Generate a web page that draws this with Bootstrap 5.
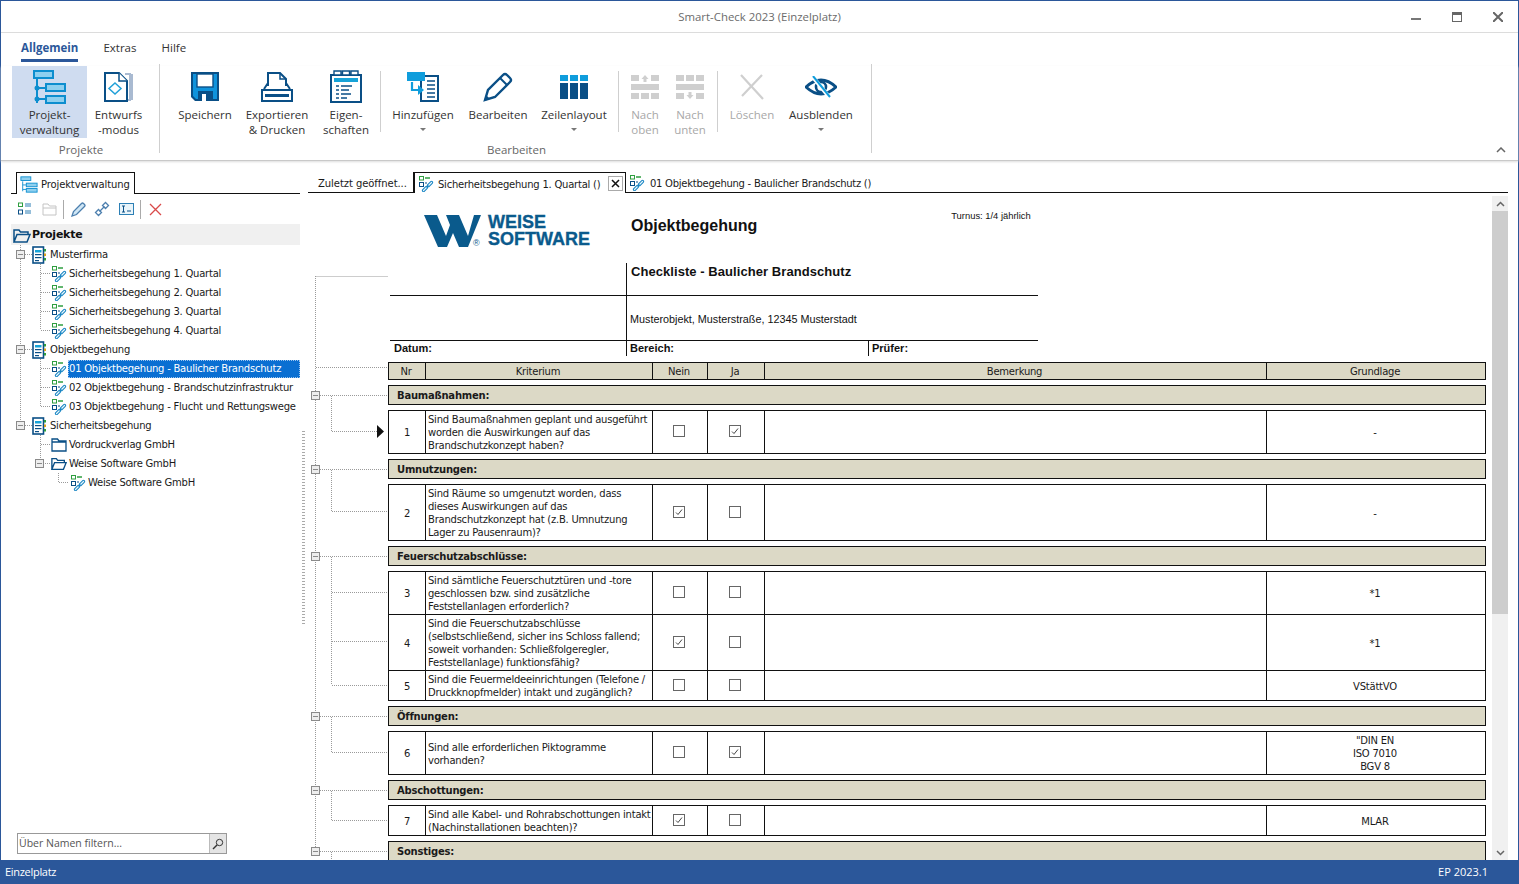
<!DOCTYPE html>
<html lang="de"><head><meta charset="utf-8"><title>Smart-Check 2023</title>
<link href="https://cdn.jsdelivr.net/npm/bootstrap@5.3.0/dist/css/bootstrap.min.css" rel="stylesheet">
<style>
html,body{height:884px;overflow:hidden;background:#fff}
body{font-family:"DejaVu Sans",sans-serif;font-size:10px;letter-spacing:-.23px;color:#1a1a1a}
svg{display:block;flex:none}
.win{height:884px;border:1px solid #2b579a;border-bottom:0}
.ui{font-family:"Open Sans",sans-serif;letter-spacing:0}
.tbar{height:32px;border-bottom:1px solid #dcdcdc;display:grid;grid-template-columns:1fr auto 1fr;align-items:center;font-size:11.4px;color:#6b6b6b}
.wctl{width:41px;display:flex;justify-content:center}
.rtabs{height:33px;padding-left:20px;font-size:11.5px;gap:25px;color:#333;line-height:16px;align-items:flex-start}
.rtab-on{color:#2b579a;font-weight:700;border-bottom:3px solid #2b579a;padding-top:7px;padding-bottom:3px}
.rtab{padding-top:7px}
.rbody{height:95px;border-bottom:1px solid #c9c9c9;box-shadow:0 1px 2px #ddd;padding-left:11px;position:relative}
.rgroup{display:flex;flex-direction:column;border-right:1px solid #cfcfcf;height:89px;margin-top:-2px;padding-top:2px}
.g1{width:148px}.g2{width:712px;padding-left:12px}
.rrow{display:flex;height:72px;align-items:flex-start;flex:none}
.rlabel{font-size:11.500px;color:#666;text-align:center;height:17px;line-height:17px;margin-top:3px;flex:none}
.g1 .rlabel{padding-right:9px}.g2 .rlabel{padding-right:10px}
.rb{display:flex;flex-direction:column;align-items:center;height:72px;font-size:11.5px;line-height:15px;color:#333;text-align:center;white-space:nowrap}
.rb-on{background:#cfdcf0}
.rb-ic{height:41px;display:flex;align-items:center;justify-content:center;flex:none}
.off{color:#a8a8a8}
.w75{width:75px}.w63{width:63px}.w66{width:66px}.w74{width:74px}.w64{width:64px}.w72{width:72px}.w80{width:80px}.w42{width:42px}.w56{width:56px}
.isep{width:1px;height:61px;background:#cfcfcf;margin-top:5px;flex:none}
.ml2{margin-left:2px}.ml3{margin-left:3px}.ml4{margin-left:4px}.ml5{margin-left:5px}.ml6{margin-left:6px}.mr5{margin-right:5px}.mr6{margin-right:6px}
.drop{width:0;height:0;border-left:3px solid transparent;border-right:3px solid transparent;border-top:3px solid #777;margin-top:6px}
.chev{position:absolute;right:12px;bottom:7px}
.main{height:699px}
.lp{width:307px;padding:11px 8px 0 10px;position:relative;flex:none}
.ptabs{height:22px;border-bottom:1px solid #111;padding-left:5px}
.ptab{width:119px;height:22px;border:1px solid #111;border-bottom:0;background:#fff;display:flex;align-items:center;gap:3px;padding:2px 0 0 3px;white-space:nowrap;letter-spacing:-.12px}
.tools{height:30px;padding-left:7px}
.tools-sep{width:1px;height:19px;background:#aaa}
.t-a{margin-left:10px;margin-right:5px}.t-b{margin-left:7px}.t-c{margin-left:8px}.t-d{margin-left:9px;margin-right:6px}.t-e{margin-left:8px}
.thead{height:21px;background:#f0f0f0;font-weight:700;font-size:11px;color:#111;padding:2px 0 0 2px;gap:1px}
.tree{position:relative}
.tree-lines{position:absolute;left:0;top:0}
.tr{height:19px;display:flex;align-items:center}
.l1{padding-left:21px}.l2{padding-left:40px}.l3{padding-left:59px}
.tr>span{margin-left:2px;line-height:18px;height:18px;flex:1;white-space:nowrap}
.l1>span{margin-left:4px}
.tr>span.sel{background:#0a6fd2;color:#fff;outline:1px dotted #9cc4ee;outline-offset:-1px;padding-left:1px;margin-left:1px}
.grip{position:absolute;left:301px;top:270px;width:3px;height:194px;background:repeating-linear-gradient(#aaa 0 1px,transparent 1px 3px)}
.filter{position:absolute;left:16px;bottom:6px;width:210px;height:21px;border:1px solid #999;padding-left:1px;color:#555;font-size:10.500px;line-height:18px;display:flex;justify-content:space-between}
.fbtn{width:17px;height:19px;background:#e4e4e4;border-left:1px solid #bbb;display:flex;align-items:center;justify-content:center}
.rp{width:1210px;padding-top:11px;flex:none}
.dtabs{height:21px;border-bottom:1px solid #111;margin-right:10px;align-items:flex-end}
.dtab{height:20px;display:flex;align-items:center;gap:4px;white-space:nowrap;padding-top:2px}
.dt1{width:106px;padding-left:10px;border-right:1px solid #111;letter-spacing:-.06px}
.dt2{width:212px;height:21px;border:1px solid #111;border-bottom:0;background:#fff;position:relative;top:1px;padding-left:3px}
.dt3{padding-left:3px;gap:5px;letter-spacing:-.26px}
.xbox{width:15px;height:15px;border:1px solid #aaa;display:flex;align-items:center;justify-content:center;margin:-1px 2px 0 auto}
.doc{height:667px;overflow:hidden;position:relative}
.gut{position:absolute;left:0;top:0}
.rep{width:1178px;padding-left:80px;flex:none}
.hd{margin-left:2px;display:grid;grid-template-columns:237px 242px 169px;grid-template-rows:70px 33px 45px 15px;width:648px;font-family:"Liberation Sans",sans-serif;letter-spacing:0;color:#111;margin-bottom:6px}
.h-logo{padding:21px 0 0 34px;display:flex;gap:7px;position:relative}
.lg{font-family:"Liberation Sans",sans-serif;font-weight:700;color:#0a5a8c;font-size:18px;line-height:16.500px;margin-top:0;-webkit-text-stroke:.35px #0a5a8c}
.reg{position:absolute;left:83px;top:46px;color:#0a5a8c;font-size:9px;line-height:9px}
.h-title{grid-column:span 2;display:flex;padding-left:4px;padding-top:23px;font-size:16px;font-weight:700;line-height:20px}
.h-turnus{font-size:9.400px;font-weight:400;margin-left:194px;margin-top:-5px;line-height:10px;white-space:nowrap}
.h-l2{border-right:1px solid #111;border-bottom:1px solid #111}
.h-r2{grid-column:span 2;border-bottom:1px solid #111;font-size:13px;font-weight:700;padding:1px 0 0 4px;line-height:16px;letter-spacing:.06px}
.h-r3{grid-column:span 2;border-bottom:1px solid #111;font-size:10.800px;padding:16px 0 0 3px;line-height:14px}
.h-d{font-weight:700;font-size:11px;padding-left:4px;line-height:15px}
.h-bd{border-right:1px solid #111}
.h-e{padding-left:3px}
.tbl{display:flex;flex-direction:column;gap:5px;width:1098px}
.trw{display:grid;grid-template-columns:37px 227px 55px 57px 502px 1fr;border:1px solid #111;background:#fff}
.trw>div{border-right:1px solid #111;display:flex;align-items:center;justify-content:center;text-align:center;padding:2px 0 1px;line-height:13px}
.trw>div:last-child{border-right:0}
.trw>div.q{justify-content:flex-start;text-align:left;padding-left:2px;white-space:nowrap}
.trw>div.c{padding-right:2px}
.thd{height:18px;background:#dcd9c6}
.trw.thd>div{padding:1px 2px 0 0}
.trw.thd{background:#dcd9c6}
.band{height:20px;background:#dcd9c6;border:1px solid #111;font-weight:700;padding-left:8px;padding-top:1px;line-height:18px}
.stack{display:flex;flex-direction:column}
.stack>.trw+.trw{margin-top:-1px}
.cb{width:12px;height:12px;border:1px solid #666;background:#fff;display:block;margin:-3px 2px 0 0}
.cb svg{width:10px;height:10px}
.sb{width:16px;height:664px;margin:3px 0 0 6px;background:#f0f0f0;flex:none;display:flex;flex-direction:column;align-items:center}
.sb-a{height:15px;display:flex;align-items:center;justify-content:center;flex:none}
.sb-t{width:16px;height:403px;background:#cdcdcd;flex:none}
.sb-s{flex:1}
.stat{height:24px;background:#2b579a;color:#fff;padding:0 31px 0 5px;font-size:11px;margin:0 -1px}
.stat span:first-child{letter-spacing:-.3px}
</style></head>
<body>
<svg width="0" height="0" class="position-absolute">
<defs>
<symbol id="book" viewBox="0 0 14 18"><rect x="1" y="1" width="10.500" height="16" fill="#fff" stroke="#0a4f86" stroke-width="1.600"/><rect x="3" y="4" width="6.500" height="2.500" fill="#16a3d8"/><rect x="3" y="8" width="6.500" height="1.200" fill="#0a4f86"/><rect x="3" y="11" width="6.500" height="1.200" fill="#0a4f86"/><rect x="3" y="14" width="4" height="1.200" fill="#0a4f86"/><rect x="12" y="3" width="2" height="2.500" fill="#2e9e3f"/><rect x="12" y="7.500" width="2" height="2.500" fill="#d9a21b"/><rect x="12" y="12" width="2" height="2.500" fill="#2e9e3f"/></symbol>
<symbol id="rpt" viewBox="0 0 16 16"><rect x="1.500" y=".5" width="4" height="3.500" fill="#fff" stroke="#2e9e3f"/><path d="M7 2h5" stroke="#2e9e3f" stroke-width="1.500"/><rect x="1.500" y="6.500" width="4" height="4" fill="#fff" stroke="#0a4f86"/><path d="M7 7h2" stroke="#0a4f86"/><path d="M5.500 14.500l3-3M10.500 9.500l3-3" stroke="#1a86c4" stroke-width="3.200" stroke-linecap="round"/><path d="M5.500 14.500l3-3M10.500 9.500l3-3" stroke="#e9f6fc" stroke-width="1.200" stroke-linecap="round"/><path d="M8.500 11.500l2-2" stroke="#1a86c4" stroke-width="1.600"/></symbol>
<symbol id="fopen" viewBox="0 0 18 14"><path d="M1 13V1h5l1.500 2H15v2.500M1 13l3-7.500h13L14 13H1z" fill="none" stroke="#0a4f86" stroke-width="1.500"/></symbol>
<symbol id="fclosed" viewBox="0 0 16 14"><path d="M1 13V1h5.500l1.500 2h7v10H1zM1 4h14" fill="none" stroke="#0a4f86" stroke-width="1.300"/></symbol>
<symbol id="tick" viewBox="0 0 10 10"><path d="M2 5.500l2 2 4-5" fill="none" stroke="#444" stroke-width="1"/></symbol>
</defs>
</svg>
<div class="win d-flex flex-column">
 <div class="tbar ui">
  <div></div><div>Smart-Check 2023 (Einzelplatz)</div>
  <div class="d-flex justify-content-end">
   <div class="wctl"><svg width="10" height="10" viewBox="0 0 10 10"><path d="M0 7h10" stroke="#777" stroke-width="2"/></svg></div>
   <div class="wctl"><svg width="10" height="10" viewBox="0 0 10 10"><rect x=".5" y=".5" width="9" height="9" fill="none" stroke="#666"/><path d="M0 2h10" stroke="#666" stroke-width="2"/></svg></div>
   <div class="wctl"><svg width="10" height="10" viewBox="0 0 10 10"><path d="M0 0l10 10M10 0L0 10" stroke="#666" stroke-width="2"/></svg></div>
  </div>
 </div>
 <div class="rtabs ui d-flex"><div class="rtab-on">Allgemein</div><div class="rtab">Extras</div><div class="rtab">Hilfe</div></div>
 <div class="rbody ui d-flex">
  <div class="rgroup g1">
   <div class="rrow">
    <div class="rb w75 rb-on"><div class="rb-ic"><svg width="34" height="36" viewBox="0 0 34 36"><path d="M4 10v24M4 19h9M4 30h9" stroke="#0d8ecf" stroke-width="2"/><rect x="1" y="2" width="19" height="7" fill="#8fd0ef" stroke="#0d8ecf" stroke-width="2"/><rect x="13" y="15" width="19" height="7" fill="#8fd0ef" stroke="#0d8ecf" stroke-width="2"/><rect x="13" y="27" width="19" height="7" fill="#8fd0ef" stroke="#0d8ecf" stroke-width="2"/><circle cx="4" cy="19" r="2.500" fill="#0d8ecf"/><circle cx="4" cy="30" r="2.500" fill="#0d8ecf"/></svg></div><div>Projekt-<br>verwaltung</div></div>
    <div class="rb w63"><div class="rb-ic"><svg width="30" height="30" viewBox="0 0 30 30"><path d="M21 2h5v26h-5M25 3h3v24h-3" fill="none" stroke="#a9bad1" stroke-width="2"/><path d="M1 1h14l8 8v20H1z" fill="#fff" stroke="#0a4f86" stroke-width="2"/><path d="M15 1v8h8" fill="#fff" stroke="#0a4f86" stroke-width="1.500"/><path d="M11 11l6 5.500-6 5.500-6-5.500z" fill="none" stroke="#21a0d8" stroke-width="1.500"/></svg></div><div>Entwurfs<br>-modus</div></div>
   </div>
   <div class="rlabel">Projekte</div>
  </div>
  <div class="rgroup g2">
   <div class="rrow">
    <div class="rb w66"><div class="rb-ic"><svg width="28" height="29" viewBox="0 0 28 29"><path d="M0 0h28v29H4l-4-4z" fill="#0a4f86"/><path d="M2 2h24v25H5l-3-3z" fill="#0f93dc"/><rect x="6" y="2" width="16" height="13" fill="#fff" stroke="#0a4f86" stroke-width="1.400"/><rect x="7" y="19" width="15" height="10" fill="#0a4f86"/><rect x="11" y="22" width="4" height="7" fill="#fff"/></svg></div><div>Speichern</div></div>
    <div class="rb w74 ml2"><div class="rb-ic"><svg width="32" height="30" viewBox="0 0 32 30"><path d="M7 14V1h12l6 6v7" fill="#fff" stroke="#0a4f86" stroke-width="2"/><path d="M19 1v6h6" fill="none" stroke="#0a4f86" stroke-width="1.500"/><path d="M7 11L3 17M25 11l4 6" stroke="#0a4f86" stroke-width="2"/><path d="M1 18h30v11H1z" fill="#fff" stroke="#0a4f86" stroke-width="2"/><rect x="4" y="22" width="24" height="3" fill="#0a4f86"/></svg></div><div>Exportieren<br>&amp; Drucken</div></div>
    <div class="rb w64"><div class="rb-ic"><svg width="32" height="33" viewBox="0 0 32 33"><rect x="1" y="5" width="30" height="27" fill="#fff" stroke="#0a4f86" stroke-width="2"/><path d="M4 1h7v4H4zM12.500 1h7v4h-7zM21 1h7v4h-7z" fill="#fff" stroke="#0a4f86" stroke-width="1.400"/><rect x="4" y="8" width="24" height="4" fill="#16a3d8"/><path d="M6 16h3M11 16h11M6 20h3M11 20h8M6 24h3M11 24h10M6 28h3M11 28h6" stroke="#0a4f86" stroke-width="1.600"/></svg></div><div>Eigen-<br>schaften</div></div>
    <div class="isep ml2"></div>
    <div class="rb w74 ml5"><div class="rb-ic"><svg width="32" height="30" viewBox="0 0 32 30"><path d="M14 4h17v25H14z" fill="#fff" stroke="#0a4f86" stroke-width="2"/><path d="M20 9h8M20 13h8M20 17h8M20 21h8M20 25h8" stroke="#0a4f86" stroke-width="1.600"/><rect x="0" y="0" width="18" height="9" fill="#0f9ddc"/><path d="M5 10v8h8" fill="none" stroke="#0f9ddc" stroke-width="2.200"/><path d="M11 13l6 5-6 5z" fill="#0f9ddc"/></svg></div><div>Hinzufügen</div><div class="drop"></div></div>
    <div class="rb w72 ml2"><div class="rb-ic"><svg width="30" height="30" viewBox="0 0 30 30"><path d="M2 28l3-10L20 3q2-2 4 0l3 3q2 2 0 4L12 25z" fill="#fff" stroke="#0a4f86" stroke-width="2.400"/><path d="M17 6l7 7" stroke="#0a4f86" stroke-width="2"/><path d="M1 29l2-6 4 4z" fill="#0a4f86"/></svg></div><div>Bearbeiten</div></div>
    <div class="rb w80"><div class="rb-ic"><svg width="28" height="24" viewBox="0 0 28 24"><path d="M0 0h8v6H0zM10 0h8v6h-8zM20 0h8v6h-8z" fill="#0f9ddc"/><path d="M0 8h8v16H0zM10 8h8v16h-8zM20 8h8v16h-8z" fill="#0a4f86"/></svg></div><div>Zeilenlayout</div><div class="drop"></div></div>
    <div class="isep ml4 mr5"></div>
    <div class="rb w42 off"><div class="rb-ic"><svg width="28" height="24" viewBox="0 0 28 24"><path d="M0 0h8v6H0zM20 0h8v6h-8zM0 9h28v6H0zM0 18h8v6H0zM10 18h8v6h-8zM20 18h8v6h-8zM14 0l3.500 4H15.500v3h-3V4H10.500z" fill="#cfcfcf"/></svg></div><div>Nach<br>oben</div></div>
    <div class="rb w42 off ml3"><div class="rb-ic"><svg width="28" height="24" viewBox="0 0 28 24"><path d="M0 0h8v6H0zM10 0h8v6h-8zM20 0h8v6h-8zM0 9h28v6H0zM0 18h8v6H0zM20 18h8v6h-8zM14 24l3.500-4H15.500v-3h-3v3H10.500z" fill="#cfcfcf"/></svg></div><div>Nach<br>unten</div></div>
    <div class="isep ml6 mr6"></div>
    <div class="rb w56 off"><div class="rb-ic"><svg width="24" height="26" viewBox="0 0 24 26"><path d="M1 1l22 24M22 1L2 22" stroke="#cfcfcf" stroke-width="2.200"/></svg></div><div>Löschen</div></div>
    <div class="rb w74 ml4"><div class="rb-ic"><svg width="32" height="22" viewBox="0 0 32 22"><path d="M1 11q15-14 30 0q-15 14-30 0z" fill="#fff" stroke="#0a4f86" stroke-width="3"/><circle cx="16" cy="11" r="5" fill="none" stroke="#0a4f86" stroke-width="2.600"/><path d="M7 0l18 22" stroke="#fff" stroke-width="4"/><path d="M8 0l17 21" stroke="#0f9ddc" stroke-width="2"/></svg></div><div>Ausblenden</div><div class="drop"></div></div>
   </div>
   <div class="rlabel">Bearbeiten</div>
  </div>
  <svg class="chev" width="10" height="6" viewBox="0 0 10 6"><path d="M1 5l4-4 4 4" fill="none" stroke="#666" stroke-width="1.500"/></svg>
 </div>
 <div class="main d-flex">
  <div class="lp">
   <div class="ptabs d-flex"><div class="ptab"><svg width="18" height="19" viewBox="0 0 20 19"><path d="M3 6v11M3 10h5M3 15h5" stroke="#0d8ecf"/><rect x="1" y="1" width="11" height="4" fill="#8fd0ef" stroke="#0d8ecf"/><rect x="7" y="8" width="12" height="4" fill="#8fd0ef" stroke="#0d8ecf"/><rect x="7" y="14" width="12" height="4" fill="#8fd0ef" stroke="#0d8ecf"/></svg>Projektverwaltung</div></div>
   <div class="tools d-flex align-items-center">
    <svg width="14" height="14" viewBox="0 0 14 14"><rect x=".5" y="1" width="4" height="3.500" fill="none" stroke="#2e9e3f"/><path d="M7 2h6M7 4h6M7 9h6M7 11h6" stroke="#2c7fb5"/><rect x=".5" y="8" width="4" height="4" fill="none" stroke="#0a4f86"/></svg>
    <svg class="t-a" width="16" height="13" viewBox="0 0 16 13"><path d="M1 12V1h5l1.500 2H14v9zM1 5h13" fill="none" stroke="#c4c4c4"/></svg>
    <div class="tools-sep"></div>
    <svg class="t-b" width="15" height="15" viewBox="0 0 15 15"><path d="M1 14l1.500-4.500L10.500 1.500q1-1 2 0l1 1q1 1 0 2L5.500 12.500z" fill="#cfe6f5" stroke="#4d7fae" stroke-width="1.300"/></svg>
    <svg class="t-c" width="16" height="16" viewBox="0 0 16 16"><path d="M1.500 11.500l3-3 3 3-3 3zM8.500 4.500l3-3 3 3-3 3z" fill="#fff" stroke="#4d7fae" stroke-width="1.300"/><path d="M5.500 10.500l5-5" stroke="#4d7fae" stroke-width="1.300"/></svg>
    <svg class="t-d" width="15" height="12" viewBox="0 0 15 12"><rect x=".5" y=".5" width="14" height="11" fill="#e8f4fa" stroke="#2c7fb5"/><path d="M3 3h3M3 9h3M4.500 3v6M8 8h4" stroke="#0a4f86"/></svg>
    <div class="tools-sep"></div>
    <svg class="t-e" width="13" height="13" viewBox="0 0 13 13"><path d="M1 1l11 11M12 1L1 12" stroke="#d94a4a" stroke-width="1.300"/></svg>
   </div>
   <div class="thead d-flex align-items-center"><svg width="18" height="14"><use href="#fopen"/></svg>Projekte</div>
   <div class="tree">
    <div class="tr l1"><svg width="14" height="18"><use href="#book"/></svg><span>Musterfirma</span></div>
    <div class="tr l2"><svg width="16" height="16"><use href="#rpt"/></svg><span>Sicherheitsbegehung 1. Quartal</span></div>
    <div class="tr l2"><svg width="16" height="16"><use href="#rpt"/></svg><span>Sicherheitsbegehung 2. Quartal</span></div>
    <div class="tr l2"><svg width="16" height="16"><use href="#rpt"/></svg><span>Sicherheitsbegehung 3. Quartal</span></div>
    <div class="tr l2"><svg width="16" height="16"><use href="#rpt"/></svg><span>Sicherheitsbegehung 4. Quartal</span></div>
    <div class="tr l1"><svg width="14" height="18"><use href="#book"/></svg><span>Objektbegehung</span></div>
    <div class="tr l2"><svg width="16" height="16"><use href="#rpt"/></svg><span class="sel">01 Objektbegehung - Baulicher Brandschutz</span></div>
    <div class="tr l2"><svg width="16" height="16"><use href="#rpt"/></svg><span>02 Objektbegehung - Brandschutzinfrastruktur</span></div>
    <div class="tr l2"><svg width="16" height="16"><use href="#rpt"/></svg><span>03 Objektbegehung - Flucht und Rettungswege</span></div>
    <div class="tr l1"><svg width="14" height="18"><use href="#book"/></svg><span>Sicherheitsbegehung</span></div>
    <div class="tr l2"><svg width="16" height="14"><use href="#fclosed"/></svg><span>Vordruckverlag GmbH</span></div>
    <div class="tr l2"><svg width="16" height="14"><use href="#fopen"/></svg><span>Weise Software GmbH</span></div>
    <div class="tr l3"><svg width="16" height="16"><use href="#rpt"/></svg><span>Weise Software GmbH</span></div>
    <svg class="tree-lines" width="289" height="250" viewBox="11 245 289 250" fill="none" stroke="#9a9a9a" stroke-dasharray="1 1">
     <path d="M20.500 245v180M25 254.500h7M40.500 264v66M41 273.500h9M41 292.500h9M41 311.500h9M41 330.500h9M25 349.500h7M40.500 359v47M41 368.500h9M41 387.500h9M41 406.500h9M25 425.500h7M40.500 435v28M41 444.500h9M45 463.500h5M58.500 473v9M59 482.500h10"/>
     <g stroke="#8a8a8a" stroke-dasharray="none" fill="#eee"><rect x="16.500" y="250.500" width="8" height="8"/><rect x="16.500" y="345.500" width="8" height="8"/><rect x="16.500" y="421.500" width="8" height="8"/><rect x="35.500" y="459.500" width="8" height="8"/><path d="M18 254.500h5M18 349.500h5M18 425.500h5M37 463.500h5"/></g>
    </svg>
   </div>
   <div class="grip"></div>
   <div class="filter ui"><span>Über Namen filtern...</span><div class="fbtn"><svg width="12" height="12" viewBox="0 0 12 12"><circle cx="7.500" cy="4.500" r="3.200" fill="none" stroke="#333"/><path d="M5 7l-4 4" stroke="#333" stroke-width="1.400"/></svg></div></div>
  </div>
  <div class="rp">
   <div class="dtabs d-flex">
    <div class="dtab dt1">Zuletzt geöffnet...</div>
    <div class="dtab dt2"><svg width="16" height="16"><use href="#rpt"/></svg>Sicherheitsbegehung 1. Quartal ()<div class="xbox"><svg width="9" height="9" viewBox="0 0 9 9"><path d="M1 1l7 7M8 1L1 8" stroke="#111" stroke-width="1.500"/></svg></div></div>
    <div class="dtab dt3"><svg width="16" height="16"><use href="#rpt"/></svg>01 Objektbegehung - Baulicher Brandschutz ()</div>
   </div>
   <div class="doc d-flex">
    <div class="rep">
     <div class="hd">
      <div class="h-logo">
       <svg width="57" height="34" viewBox="0 0 57 34"><path d="M0 1h13l9 21 4-11L22 1h13l9 21L50 1h7L44 33H35l-6-14-6 14H14z" fill="#0a5a8c"/></svg>
       <div class="lg">WEISE<br>SOFTWARE</div><span class="reg">®</span>
      </div>
      <div class="h-title">Objektbegehung<span class="h-turnus">Turnus: 1/4 jährlich</span></div>
      <div class="h-l2"></div><div class="h-r2">Checkliste - Baulicher Brandschutz</div>
      <div class="h-l2"></div><div class="h-r3">Musterobjekt, Musterstraße, 12345 Musterstadt</div>
      <div class="h-d h-bd">Datum:</div><div class="h-d h-e h-bd">Bereich:</div><div class="h-d h-e">Prüfer:</div>
     </div>
     <div class="tbl">
      <div class="trw thd"><div>Nr</div><div>Kriterium</div><div>Nein</div><div>Ja</div><div>Bemerkung</div><div>Grundlage</div></div>
      <div class="band">Baumaßnahmen:</div>
      <div class="trw"><div>1</div><div class="q">Sind Baumaßnahmen geplant und ausgeführt<br>worden die Auswirkungen auf das<br>Brandschutzkonzept haben?</div><div><span class="cb"></span></div><div><span class="cb"><svg><use href="#tick"/></svg></span></div><div></div><div class="c">-</div></div>
      <div class="band">Umnutzungen:</div>
      <div class="trw"><div>2</div><div class="q">Sind Räume so umgenutzt worden, dass<br>dieses Auswirkungen auf das<br>Brandschutzkonzept hat (z.B. Umnutzung<br>Lager zu Pausenraum)?</div><div><span class="cb"><svg><use href="#tick"/></svg></span></div><div><span class="cb"></span></div><div></div><div class="c">-</div></div>
      <div class="band">Feuerschutzabschlüsse:</div>
      <div class="stack">
       <div class="trw"><div>3</div><div class="q">Sind sämtliche Feuerschutztüren und -tore<br>geschlossen bzw. sind zusätzliche<br>Feststellanlagen erforderlich?</div><div><span class="cb"></span></div><div><span class="cb"></span></div><div></div><div class="c">*1</div></div>
       <div class="trw"><div>4</div><div class="q">Sind die Feuerschutzabschlüsse<br>(selbstschließend, sicher ins Schloss fallend;<br>soweit vorhanden: Schließfolgeregler,<br>Feststellanlage) funktionsfähig?</div><div><span class="cb"><svg><use href="#tick"/></svg></span></div><div><span class="cb"></span></div><div></div><div class="c">*1</div></div>
       <div class="trw"><div>5</div><div class="q">Sind die Feuermeldeeinrichtungen (Telefone /<br>Druckknopfmelder) intakt und zugänglich?</div><div><span class="cb"></span></div><div><span class="cb"></span></div><div></div><div class="c">VStättVO</div></div>
      </div>
      <div class="band">Öffnungen:</div>
      <div class="trw"><div>6</div><div class="q">Sind alle erforderlichen Piktogramme<br>vorhanden?</div><div><span class="cb"></span></div><div><span class="cb"><svg><use href="#tick"/></svg></span></div><div></div><div class="c">"DIN EN<br>ISO 7010<br>BGV 8</div></div>
      <div class="band">Abschottungen:</div>
      <div class="trw"><div>7</div><div class="q">Sind alle Kabel- und Rohrabschottungen intakt<br>(Nachinstallationen beachten)?</div><div><span class="cb"><svg><use href="#tick"/></svg></span></div><div><span class="cb"></span></div><div></div><div class="c">MLAR</div></div>
      <div class="band">Sonstiges:</div>
     </div>
    </div>
    <div class="sb"><div class="sb-a"><svg width="9" height="6" viewBox="0 0 9 6"><path d="M1 5l3.500-3.500L8 5" fill="none" stroke="#666" stroke-width="1.500"/></svg></div><div class="sb-t"></div><div class="sb-s"></div><div class="sb-a"><svg width="9" height="6" viewBox="0 0 9 6"><path d="M1 1l3.500 3.500L8 1" fill="none" stroke="#666" stroke-width="1.500"/></svg></div></div>
    <svg class="gut" width="80" height="667" viewBox="308 193 80 667" fill="none" stroke="#9a9a9a" stroke-dasharray="1 1">
     <path d="M315.500 276.500H388M315.500 276v575M316 367.500H388M320 395.500H388M331.500 396v36M332 431.500H377M320 469.500H388M331.500 470v42M332 511.500H388M320 556.500H388M331.500 557v128M332 592.500H388M332 641.500H388M332 685.500H388M320 716.500H388M331.500 717v36M332 752.500H388M320 790.500H388M331.500 791v30M332 820.500H388M320 851.500H388M331.500 852v8"/>
     <g stroke="#8a8a8a" stroke-dasharray="none" fill="#eee"><rect x="311.500" y="391.500" width="8" height="8"/><rect x="311.500" y="465.500" width="8" height="8"/><rect x="311.500" y="552.500" width="8" height="8"/><rect x="311.500" y="712.500" width="8" height="8"/><rect x="311.500" y="786.500" width="8" height="8"/><rect x="311.500" y="847.500" width="8" height="8"/><path d="M313 395.500h5M313 469.500h5M313 556.500h5M313 716.500h5M313 790.500h5M313 851.500h5"/></g>
     <path d="M377 425l7 6.500-7 6.500z" fill="#111" stroke="none"/>
    </svg>
   </div>
  </div>
 </div>
 <div class="stat ui d-flex align-items-center justify-content-between"><span>Einzelplatz</span><span>EP 2023.1</span></div>
</div>
<script src="https://cdn.jsdelivr.net/npm/bootstrap@5.3.0/dist/js/bootstrap.bundle.min.js"></script>
</body></html>
